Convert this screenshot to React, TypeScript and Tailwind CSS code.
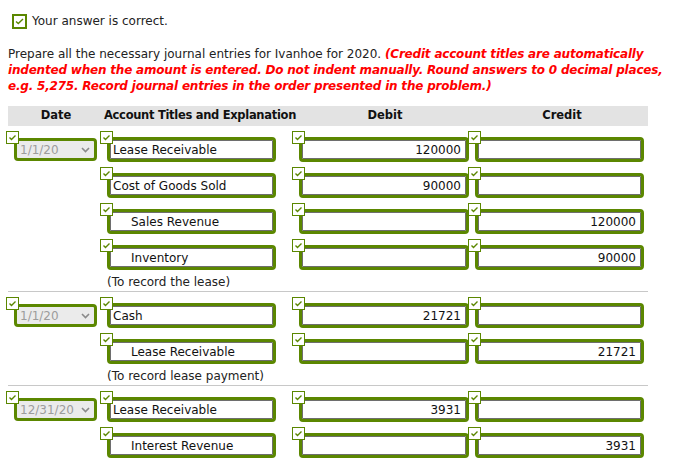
import React from "react";

type Row = { account: string; indent?: boolean; debit?: string; credit?: string; date?: string };
type Group = { rows: Row[]; note: string };

const GROUPS: Group[] = [
  {
    rows: [
      { date: "1/1/20", account: "Lease Receivable", debit: "120000" },
      { account: "Cost of Goods Sold", debit: "90000" },
      { account: "Sales Revenue", indent: true, credit: "120000" },
      { account: "Inventory", indent: true, credit: "90000" },
    ],
    note: "(To record the lease)",
  },
  {
    rows: [
      { date: "1/1/20", account: "Cash", debit: "21721" },
      { account: "Lease Receivable", indent: true, credit: "21721" },
    ],
    note: "(To record lease payment)",
  },
  {
    rows: [
      { date: "12/31/20", account: "Lease Receivable", debit: "3931" },
      { account: "Interest Revenue", indent: true, credit: "3931" },
    ],
    note: "",
  },
];

function SmallCheck({ className }: { className: string }) {
  return (
    <span
      className={`absolute w-[13px] h-[13px] border border-[#5b8700] bg-white flex items-center justify-center z-10 ${className}`}
    >
      <svg width="9" height="7" viewBox="0 0 9 7" fill="none">
        <path d="M1.5 3.5 L3.5 5.5 L7.5 1.5" stroke="#5b8700" strokeWidth="1.4" />
      </svg>
    </span>
  );
}

function Field({ value, align, indent, width }: { value?: string; align: "left" | "right"; indent?: boolean; width: string }) {
  return (
    <div className={`relative h-[25px] ${width}`}>
      <SmallCheck className="-left-[7px] -top-[6px]" />
      <div
        className={`h-full rounded-[4px] border-[3px] border-[#5b8700] bg-white shadow-[inset_0_0_0_1px_#6e6e6e] flex items-center text-[12px] text-[#111] ${
          align === "right" ? "justify-end pr-[5px]" : indent ? "pl-[21px]" : "pl-[3px]"
        }`}
      >
        {value}
      </div>
    </div>
  );
}

function DateSelect({ value }: { value: string }) {
  return (
    <div className="relative h-[23px] w-[83px] ml-[6px] mt-[1px]">
      <SmallCheck className="-left-[8px] -top-[7px]" />
      <div className="h-full rounded-[4px] border-[3px] border-[#5b8700] bg-[#ebebeb] flex items-center justify-between pl-[3px] pr-[4px] text-[12px] text-[#9c9c9c]">
        <span>{value}</span>
        <svg width="9" height="6" viewBox="0 0 9 6" fill="none">
          <path d="M1 1 L4.5 4.5 L8 1" stroke="#8a8a8a" strokeWidth="1.6" />
        </svg>
      </div>
    </div>
  );
}

export default function App() {
  return (
    <div className="w-[684px] h-[469px] overflow-hidden bg-white text-[#222] font-['DejaVu_Sans',Verdana,sans-serif] text-[12px]">
      {/* Result banner */}
      <div className="flex items-center gap-[5px] pl-[12px] pt-[12px]">
        <span className="w-[15px] h-[15px] border-2 border-[#5b8700] flex items-center justify-center">
          <svg width="9" height="7" viewBox="0 0 9 7" fill="none">
            <path d="M1 3.5 L3.3 5.6 L8 1" stroke="#5b8700" strokeWidth="1.4" />
          </svg>
        </span>
        <span className="text-[12px]">Your answer is correct.</span>
      </div>

      {/* Instructions */}
      <p className="pl-[8px] mt-[16px] leading-[16px] text-[12px]">
        Prepare all the necessary journal entries for Ivanhoe for 2020.{" "}
        <span className="text-[#ff0000] font-bold italic tracking-[-0.2px]">
          (Credit account titles are automatically indented when the amount is entered. Do not indent manually. Round
          answers to 0 decimal places, e.g. 5,275. Record journal entries in the order presented in the problem.)
        </span>
      </p>

      {/* Table */}
      <div className="ml-[8px] w-[640px] mt-[12px]">
        <div className="flex h-[20px] items-center bg-[#e3e3e3] font-bold text-[11.5px] text-[#111] whitespace-nowrap">
          <div className="w-[96px] text-center">Date</div>
          <div className="w-[190px] text-center tracking-[-0.3px]">Account Titles and Explanation</div>
          <div className="w-[182px] text-center">Debit</div>
          <div className="w-[172px] text-center">Credit</div>
        </div>

        {GROUPS.map((g, gi) => (
          <div key={gi} className={g.note ? "border-b border-[#c8c8c8] pb-[2px]" : ""}>
            {g.rows.map((r, ri) => (
              <div key={ri} className="flex pt-[11px]">
                <div className="w-[96px]">{r.date && <DateSelect value={r.date} />}</div>
                <div className="ml-[3px]">
                  <Field value={r.account} align="left" indent={r.indent} width="w-[169px]" />
                </div>
                <div className="ml-[23px]">
                  <Field value={r.debit} align="right" width="w-[170px]" />
                </div>
                <div className="ml-[6px]">
                  <Field value={r.credit} align="right" width="w-[169px]" />
                </div>
              </div>
            ))}
            {g.note && <div className="ml-[99px] mt-[5px] h-[14px] leading-[14px] text-[12px] text-[#222]">{g.note}</div>}
          </div>
        ))}
      </div>
    </div>
  );
}
